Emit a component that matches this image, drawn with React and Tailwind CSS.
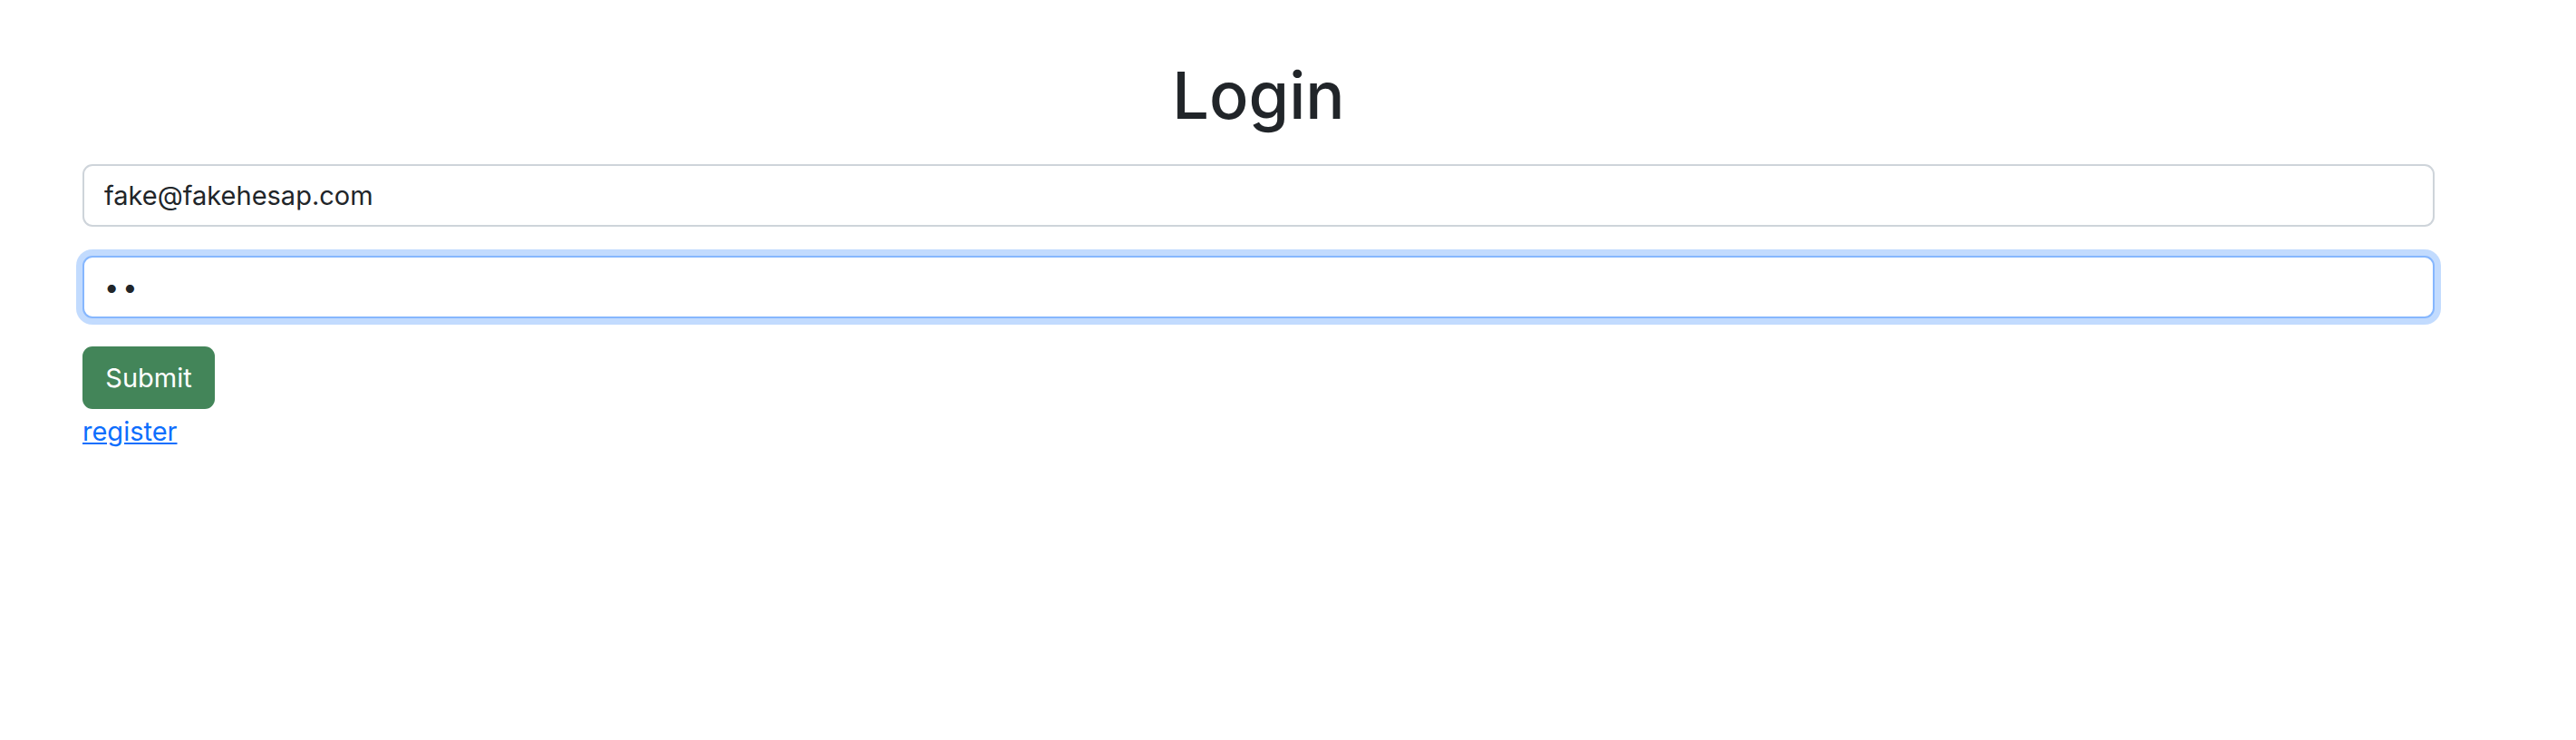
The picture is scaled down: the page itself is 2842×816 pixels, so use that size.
import { useState } from 'react';

const inputBase =
  'block h-[69px] w-full rounded-[11px] border-2 bg-white px-[22px] text-[29px] leading-[1.5] text-[#212529] outline-none';

const Login = () => {
  const [email, setEmail] = useState('fake@fakehesap.com');
  const [password, setPassword] = useState('ab');

  return (
    <div className="min-h-[816px] bg-white pl-[91px] pr-[156px] pt-[62px] font-['Inter','Noto_Sans',sans-serif] text-[#212529]">
      <h1 className="text-center text-[72px] font-medium leading-[1.2]">Login</h1>

      <form className="mt-[33px] flex flex-col" onSubmit={(e) => e.preventDefault()}>
        <input
          type="email"
          value={email}
          onChange={(e) => setEmail(e.target.value)}
          className={`${inputBase} border-[#ced4da]`}
        />
        <input
          type="password"
          value={password}
          onChange={(e) => setPassword(e.target.value)}
          className={`${inputBase} mt-[32px] border-[#86b7fe] tracking-[4px] shadow-[0_0_0_7px_rgba(13,110,253,0.25)]`}
        />
        <div className="mt-[31px]">
          <button
            type="submit"
            className="flex h-[69px] w-[146px] items-center justify-center rounded-[11px] bg-[#438559] text-[29px] leading-[1.5] text-white"
          >
            Submit
          </button>
        </div>
      </form>
      <div className="pt-[3px]">
        <a href="#register" className="text-[29px] leading-[1.5] text-[#0d6efd] underline">
          register
        </a>
      </div>
    </div>
  );
};

export default function App() {
  return <Login />;
}
